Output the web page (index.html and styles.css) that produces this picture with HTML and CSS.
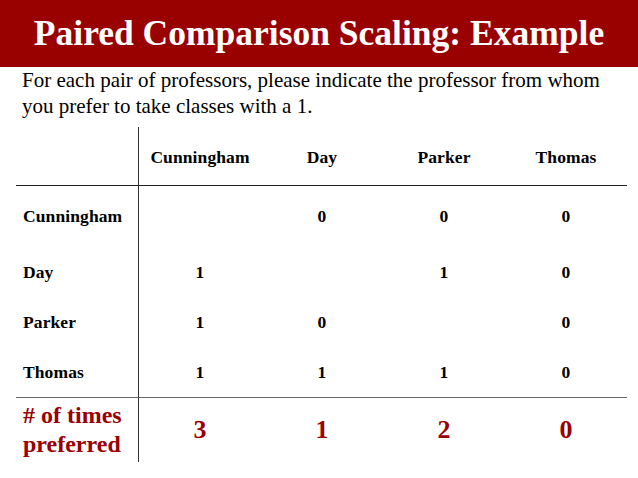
FILE: index.html
```html
<!DOCTYPE html>
<html>
<head>
<meta charset="utf-8">
<link rel="stylesheet" href="styles.css">
</head>
<body>
<header class="banner"><h1 class="title">Paired Comparison Scaling: Example</h1></header>
<p class="intro">For each pair of professors, please indicate the professor from whom<br>you prefer to take classes with a 1.</p>
<div class="matrix">
  <div class="cell label head"></div>
  <div class="cell head">Cunningham</div>
  <div class="cell head">Day</div>
  <div class="cell head">Parker</div>
  <div class="cell head">Thomas</div>

  <div class="cell label">Cunningham</div>
  <div class="cell"></div>
  <div class="cell">0</div>
  <div class="cell">0</div>
  <div class="cell">0</div>

  <div class="cell label">Day</div>
  <div class="cell">1</div>
  <div class="cell"></div>
  <div class="cell">1</div>
  <div class="cell">0</div>

  <div class="cell label">Parker</div>
  <div class="cell">1</div>
  <div class="cell">0</div>
  <div class="cell"></div>
  <div class="cell">0</div>

  <div class="cell label">Thomas</div>
  <div class="cell">1</div>
  <div class="cell">1</div>
  <div class="cell">1</div>
  <div class="cell">0</div>

  <div class="cell label total total-label"># of times<br>preferred</div>
  <div class="cell total total-num">3</div>
  <div class="cell total total-num">1</div>
  <div class="cell total total-num">2</div>
  <div class="cell total total-num">0</div>
</div>
</body>
</html>
```

FILE: styles.css
```css
html, body {
  margin: 0;
  padding: 0;
  background: #ffffff;
}
body {
  width: 638px;
  height: 478px;
  overflow: hidden;
  font-family: "Liberation Serif", "Times New Roman", serif;
  color: #000;
}
.banner {
  background: #990000;
  height: 67px;
}
.title {
  margin: 0;
  font-size: 35.5px;
  line-height: 67px;
  font-weight: bold;
  color: #ffffff;
  text-align: center;
}
.intro {
  margin: 0;
  padding-left: 22px;
  font-size: 21px;
  line-height: 26px;
}
.matrix {
  margin: 8px 0 0 16px;
  display: grid;
  grid-template-columns: 123px repeat(4, 122px);
  grid-template-rows: 59px 61px 50px 50px 50px 65px;
}
.cell {
  display: flex;
  align-items: center;
  justify-content: center;
  font-weight: bold;
  font-size: 17.5px;
  letter-spacing: 0.1px;
}
.label {
  justify-content: flex-start;
  padding-left: 7px;
  border-right: 1px solid #333;
}
.head {
  border-bottom: 1px solid #222;
  padding-top: 3px;
}
.total {
  border-top: 1px solid #666;
  color: #990000;
}
.total-label {
  font-size: 24px;
  line-height: 29px;
  letter-spacing: 0;
}
.total-num {
  font-size: 26px;
}
```
